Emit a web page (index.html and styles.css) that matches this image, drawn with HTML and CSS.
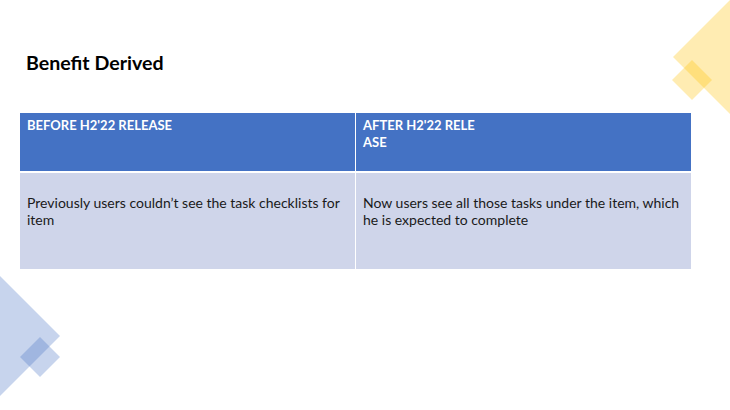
FILE: index.html
```html
<!DOCTYPE html>
<html>
<head>
<meta charset="utf-8">
<link rel="stylesheet" href="styles.css">
</head>
<body>
<div class="slide">
  <svg class="deco deco-tr" width="60" height="120" viewBox="670 0 60 120">
    <polygon points="730,0 673,57 730,114" fill="rgba(255,192,0,0.3)"/>
    <polygon points="672,80 692,60 712,80 692,100" fill="rgba(255,192,0,0.3)"/>
  </svg>
  <svg class="deco deco-bl" width="62" height="130" viewBox="0 270 62 130">
    <polygon points="0,276 60,336 0,396" fill="rgba(68,114,196,0.3)"/>
    <polygon points="20,357 40,337 60,357 40,377" fill="rgba(68,114,196,0.3)"/>
  </svg>
  <h1 class="title">Benefit Derived</h1>
  <div class="table">
    <div class="cell head">BEFORE H2'22 RELEASE</div>
    <div class="cell head">AFTER H2'22 RELE<br>ASE</div>
    <div class="cell body">Previously users couldn’t see the task checklists for item</div>
    <div class="cell body">Now users see all those tasks under the item, which he is expected to complete</div>
  </div>
</div>
</body>
</html>
```
FILE: styles.css
```css
* { box-sizing: border-box; }
html, body { margin: 0; padding: 0; background: #fff; }
.slide {
  position: relative;
  width: 730px;
  height: 410px;
  overflow: hidden;
  font-family: Lato, "Open Sans", sans-serif;
  padding: 51px 40px 0 20px;
}
.deco { position: absolute; }
.deco-tr { right: 0; top: 0; }
.deco-bl { left: 0; top: 270px; }
.title {
  margin: 0 0 0 6px;
  font-size: 19.6px;
  font-weight: 700;
  color: #000;
  line-height: 24px;
}
.table {
  margin-top: 38px;
  width: 670px;
  display: grid;
  grid-template-columns: 335px 335px;
  grid-template-rows: 58px 96px;
  gap: 2px 1px;
  background: #fff;
}
.cell {
  padding-left: 7px;
  padding-right: 6px;
}
.head {
  background: #4472c4;
  color: #fff;
  font-weight: 700;
  font-size: 13px;
  line-height: 16.5px;
  padding-top: 4px;
}
.body {
  background: #cfd5ea;
  color: #1a1a1a;
  font-size: 14px;
  line-height: 16.5px;
  padding-top: 22px;
}
```
